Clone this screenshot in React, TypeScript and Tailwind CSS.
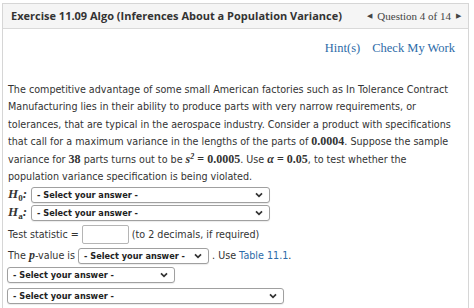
import React from "react";

const sans = "font-['DejaVu_Sans','Verdana',sans-serif]";
const serif = "font-['Liberation_Serif','Times_New_Roman',serif]";
const math = "font-['Liberation_Serif',serif] font-bold text-[12px]";

// Chevron used in the select boxes
const Chevron = () => (
  <svg width="8" height="6" viewBox="0 0 8 6" className="shrink-0">
    <path d="M1 1.3 L4 4.4 L7 1.3" fill="none" stroke="#333" strokeWidth="1.7" />
  </svg>
);

interface SelectProps {
  width: string;
}

const FakeSelect: React.FC<SelectProps> = ({ width }) => (
  <div
    className={`${width} h-[16px] flex items-center justify-between border border-[#a0a0a0] rounded-[3px] bg-white pl-[5px] pr-[6px] text-[8.2px] font-bold text-[#222] shadow-[0_1px_1px_rgba(0,0,0,0.08)]`}
  >
    <span className="leading-none">- Select your answer -</span>
    <Chevron />
  </div>
);

// H0 / Ha label
const HypLabel = ({ sub }: { sub: string }) => (
  <span className={`${serif} font-bold italic text-[13px] w-[21px] h-[17px] leading-[16px] whitespace-nowrap`}>
    H<span className="not-italic text-[9px] relative top-[3px]">{sub}</span>:
  </span>
);

const App: React.FC = () => {
  return (
    <div className="w-[474px] h-[308px] bg-white overflow-hidden pt-[3px] pl-[2px] pr-[5px]">
      <div className="h-[305px] border-l border-r border-t border-[#d6d6d6]">
        {/* Header */}
        <div className="h-[25px] bg-[#f5f5f5] border-b border-[#d9d9d9] flex items-center justify-between pl-[8px] pr-[7px]">
          <span className="font-['Open_Sans',sans-serif] font-bold text-[11px] text-[#333] whitespace-nowrap">
            Exercise 11.09 Algo (Inferences About a Population Variance)
          </span>
          <span className={`${serif} text-[11px] text-[#444] flex items-center gap-[5px] whitespace-nowrap`}>
            <span className="text-[7px]">◀</span>
            Question 4 of 14
            <span className="text-[7px]">▶</span>
          </span>
        </div>

        {/* Links */}
        <div className={`${serif} flex justify-end gap-[12px] pr-[13px] pt-[11px] text-[12.5px] leading-[16px] text-[#2d6ba8]`}>
          <span>Hint(s)</span>
          <span>Check My Work</span>
        </div>

        {/* Problem text */}
        <div className={`${sans} text-[9.6px] leading-[17.4px] text-[#333] pl-[5px] pr-[10px] pt-[25px]`}>
          <p>
            The competitive advantage of some small American factories such as In Tolerance Contract
            Manufacturing lies in their ability to produce parts with very narrow requirements, or
            tolerances, that are typical in the aerospace industry. Consider a product with specifications
            that call for a maximum variance in the lengths of the parts of <span className={math}>0.0004</span>.
            Suppose the sample variance for <span className={math}>38</span> parts turns out to be{" "}
            <span className={`${math} italic`}>
              s<sup className="text-[8px]">2</sup>
            </span>{" "}
            <span className={math}>= 0.0005</span>. Use <span className={`${math} italic`}>α</span>{" "}
            <span className={math}>= 0.05</span>, to test whether the population variance specification is
            being violated.
          </p>

          {/* Hypotheses */}
          <div className="mt-[1px] flex flex-col gap-[1px]">
            <div className="flex items-center gap-[2px] h-[17px]">
              <HypLabel sub="0" />
              <FakeSelect width="w-[239px]" />
            </div>
            <div className="flex items-center gap-[2px] h-[17px]">
              <HypLabel sub="a" />
              <FakeSelect width="w-[239px]" />
            </div>
          </div>

          {/* Test statistic */}
          <div className="mt-[4px] flex items-center gap-[3px] h-[19px]">
            <span>Test statistic =</span>
            <div className="w-[47px] h-[19px] border border-[#b5b5b5] rounded-[2px]" />
            <span>(to 2 decimals, if required)</span>
          </div>

          {/* p-value */}
          <div className="mt-[3px] flex items-center gap-[3px] h-[17px]">
            <span>
              The <span className={`${serif} font-bold italic text-[12px]`}>p</span>-value is
            </span>
            <FakeSelect width="w-[131px]" />
            <span>
              . Use <span className="text-[#2d6ba8]">Table 11.1</span>.
            </span>
          </div>

          <div className="mt-[3px] -ml-[1px] flex flex-col gap-[5px]">
            <FakeSelect width="w-[168px]" />
            <FakeSelect width="w-[277px]" />
          </div>
        </div>
      </div>
    </div>
  );
};

export default App;
